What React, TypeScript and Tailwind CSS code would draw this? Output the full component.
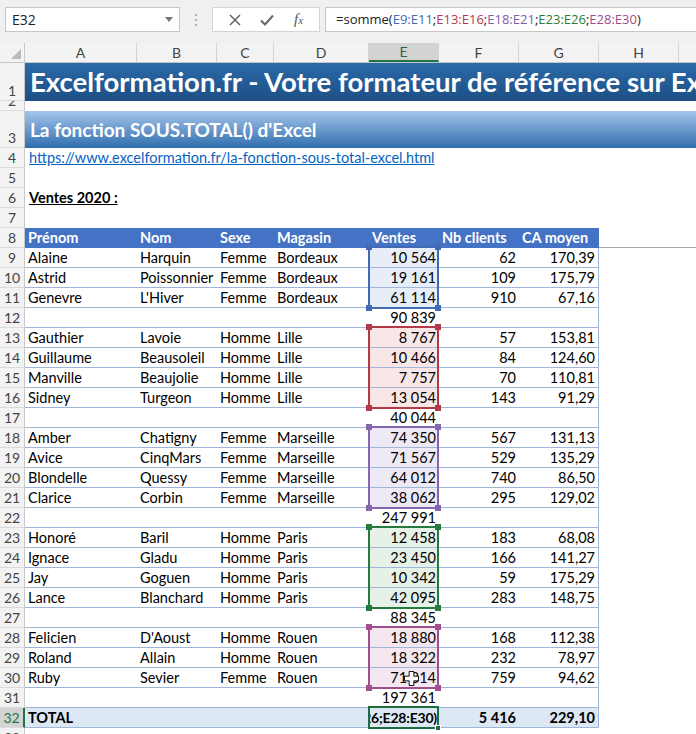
import React from 'react'

type Rng = { from: number; to: number; box: string; fill: string; dot: string; h: string }

// colour boxes drawn by Excel around the references of the formula being edited
const RANGES: Rng[] = [
  { from: 9, to: 11, box: 'border-[#4169b4]', fill: 'bg-[#e8eef8]', dot: 'bg-[#4169b4]', h: 'h-[63px]' },
  { from: 13, to: 16, box: 'border-[#b23a48]', fill: 'bg-[#f9e7e8]', dot: 'bg-[#b23a48]', h: 'h-[83px]' },
  { from: 18, to: 21, box: 'border-[#8465ae]', fill: 'bg-[#eeeaf5]', dot: 'bg-[#8465ae]', h: 'h-[83px]' },
  { from: 23, to: 26, box: 'border-[#267a3e]', fill: 'bg-[#e6f1e7]', dot: 'bg-[#267a3e]', h: 'h-[83px]' },
  { from: 28, to: 30, box: 'border-[#a04e8e]', fill: 'bg-[#f4e7f0]', dot: 'bg-[#a04e8e]', h: 'h-[63px]' },
]

const DATA: { r: number; v: string[] }[] = [
  { r: 9, v: ['Alaine', 'Harquin', 'Femme', 'Bordeaux', '10 564', '62', '170,39'] },
  { r: 10, v: ['Astrid', 'Poissonnier', 'Femme', 'Bordeaux', '19 161', '109', '175,79'] },
  { r: 11, v: ['Genevre', "L'Hiver", 'Femme', 'Bordeaux', '61 114', '910', '67,16'] },
  { r: 12, v: ['', '', '', '', '90 839', '', ''] },
  { r: 13, v: ['Gauthier', 'Lavoie', 'Homme', 'Lille', '8 767', '57', '153,81'] },
  { r: 14, v: ['Guillaume', 'Beausoleil', 'Homme', 'Lille', '10 466', '84', '124,60'] },
  { r: 15, v: ['Manville', 'Beaujolie', 'Homme', 'Lille', '7 757', '70', '110,81'] },
  { r: 16, v: ['Sidney', 'Turgeon', 'Homme', 'Lille', '13 054', '143', '91,29'] },
  { r: 17, v: ['', '', '', '', '40 044', '', ''] },
  { r: 18, v: ['Amber', 'Chatigny', 'Femme', 'Marseille', '74 350', '567', '131,13'] },
  { r: 19, v: ['Avice', 'CinqMars', 'Femme', 'Marseille', '71 567', '529', '135,29'] },
  { r: 20, v: ['Blondelle', 'Quessy', 'Femme', 'Marseille', '64 012', '740', '86,50'] },
  { r: 21, v: ['Clarice', 'Corbin', 'Femme', 'Marseille', '38 062', '295', '129,02'] },
  { r: 22, v: ['', '', '', '', '247 991', '', ''] },
  { r: 23, v: ['Honoré', 'Baril', 'Homme', 'Paris', '12 458', '183', '68,08'] },
  { r: 24, v: ['Ignace', 'Gladu', 'Homme', 'Paris', '23 450', '166', '141,27'] },
  { r: 25, v: ['Jay', 'Goguen', 'Homme', 'Paris', '10 342', '59', '175,29'] },
  { r: 26, v: ['Lance', 'Blanchard', 'Homme', 'Paris', '42 095', '283', '148,75'] },
  { r: 27, v: ['', '', '', '', '88 345', '', ''] },
  { r: 28, v: ['Felicien', "D'Aoust", 'Homme', 'Rouen', '18 880', '168', '112,38'] },
  { r: 29, v: ['Roland', 'Allain', 'Homme', 'Rouen', '18 322', '232', '78,97'] },
  { r: 30, v: ['Ruby', 'Sevier', 'Femme', 'Rouen', '71 814', '759', '94,62'] },
  { r: 31, v: ['', '', '', '', '197 361', '', ''] },
]

const COLW = ['w-[112px]', 'w-[80px]', 'w-[57px]', 'w-[95px]', 'w-[70px]', 'w-[80px]', 'w-[80px]']
const HEADERS = ['Prénom', 'Nom', 'Sexe', 'Magasin', 'Ventes', 'Nb clients', 'CA moyen']
const LETTERS = ['A', 'B', 'C', 'D', 'E', 'F', 'G', 'H']
const LETTER_W = [...COLW, 'w-[80px]']

function Line({ n, h = 'h-[20px]', sel = false, children }: { n: number; h?: string; sel?: boolean; children?: React.ReactNode }) {
  return (
    <div className={`flex ${h}`}>
      <div
        className={`w-[25px] shrink-0 flex items-end justify-center overflow-hidden border-b border-b-[#dadada] text-[14px] leading-[19px] ${
          sel ? 'bg-[#d3d3d3] text-[#217346] border-r-2 border-r-[#217346]' : 'bg-[#f3f3f3] text-[#444] border-r border-r-[#c8c8c8]'
        }`}
      >
        {n}
      </div>
      {children}
    </div>
  )
}

function Handles({ dot }: { dot: string }) {
  return (
    <>
      <span className={`absolute -left-[4px] -top-[4px] w-[6px] h-[6px] ${dot}`} />
      <span className={`absolute -right-[4px] -top-[4px] w-[6px] h-[6px] ${dot}`} />
      <span className={`absolute -left-[4px] -bottom-[4px] w-[6px] h-[6px] ${dot}`} />
      <span className={`absolute -right-[4px] -bottom-[4px] w-[6px] h-[6px] ${dot}`} />
    </>
  )
}

function DataRow({ r, v }: { r: number; v: string[] }) {
  const rng = RANGES.find((x) => r >= x.from && r <= x.to)
  return (
    <Line n={r}>
      {v.map((val, i) => {
        const num = i >= 4
        const isE = i === 4
        return (
          <div
            key={i}
            className={`${COLW[i]} shrink-0 h-full flex items-center px-[3px] border-b border-b-[#9fb5d9] overflow-visible whitespace-nowrap ${
              num ? 'justify-end' : 'justify-start'
            } ${i === 6 ? 'border-r border-r-[#9fb5d9]' : ''} ${isE && rng ? `${rng.fill} relative` : ''}`}
          >
            {val}
            {isE && rng && rng.from === r && (
              <div className={`absolute left-[-1px] top-[-2px] w-[71px] ${rng.h} border-2 ${rng.box} z-10 pointer-events-none`}>
                <Handles dot={rng.dot} />
              </div>
            )}
            {isE && r === 30 && (
              <svg viewBox="0 0 16 16" className="absolute left-[35px] top-[3px] w-[15px] h-[15px] z-20">
                <path d="M5.5 0.5H10.5V5.5H15.5V10.5H10.5V15.5H5.5V10.5H0.5V5.5H5.5Z" fill="white" stroke="black" strokeWidth="1" />
              </svg>
            )}
          </div>
        )
      })}
    </Line>
  )
}

function FormulaBar() {
  return (
    <div className="h-[43px] bg-[#f0f0f0] flex items-start pt-[7px] font-['Open_Sans',sans-serif]">
      <div className="ml-[5px] w-[175px] h-[25px] bg-white border border-[#c6c6c6] flex items-center justify-between pl-[6px] pr-[6px] text-[14px] text-[#222]">
        <span>E32</span>
        <svg viewBox="0 0 8 5" className="w-[8px] h-[5px]">
          <path d="M0 0H8L4 5Z" fill="#777" />
        </svg>
      </div>
      <div className="w-[32px] h-[25px] flex flex-col items-center justify-center gap-[3px]">
        <span className="w-[2px] h-[2px] bg-[#b0b0b0]" />
        <span className="w-[2px] h-[2px] bg-[#b0b0b0]" />
        <span className="w-[2px] h-[2px] bg-[#b0b0b0]" />
      </div>
      <div className="w-[108px] h-[25px] bg-white border border-[#d4d4d4] flex items-center justify-around px-[6px]">
        <svg viewBox="0 0 12 12" className="w-[12px] h-[12px]">
          <path d="M1 1L11 11M11 1L1 11" stroke="#666" strokeWidth="1.5" />
        </svg>
        <svg viewBox="0 0 14 12" className="w-[14px] h-[12px]">
          <path d="M1 6.5L5 10.5L13 1.5" stroke="#666" strokeWidth="2" fill="none" />
        </svg>
        <span className="font-['Liberation_Serif',serif] italic text-[15px] text-[#555] leading-none">
          f<span className="text-[11px]">x</span>
        </span>
      </div>
      <div className="ml-[5px] flex-1 h-[25px] bg-white border border-[#c6c6c6] border-r-0 flex items-center pl-[10px] text-[13px] text-[#222] whitespace-nowrap overflow-hidden">
        =somme(
        <span className="text-[#3f6ab5]">E9:E11</span>;<span className="text-[#b23a48]">E13:E16</span>;
        <span className="text-[#7d5ea8]">E18:E21</span>;<span className="text-[#2e7d32]">E23:E26</span>;
        <span className="text-[#9e4d8c]">E28:E30</span>)
      </div>
    </div>
  )
}

export default function App() {
  return (
    <div className="w-[696px] h-[734px] overflow-hidden bg-white font-['Lato',sans-serif] text-[14.5px] text-black">
      <FormulaBar />

      {/* column letters */}
      <div className="flex h-[20px] bg-[#f3f3f3] border-b border-b-[#c6c6c6] text-[14px] text-[#444]">
        <div className="w-[25px] shrink-0 border-r border-r-[#c8c8c8] relative">
          <svg viewBox="0 0 10 10" className="absolute right-[3px] bottom-[3px] w-[10px] h-[10px]">
            <path d="M10 0V10H0Z" fill="#b9b9b9" />
          </svg>
        </div>
        {LETTERS.map((l, i) => (
          <div
            key={l}
            className={`${LETTER_W[i]} shrink-0 flex items-center justify-center border-r border-r-[#d4d4d4] ${
              l === 'E' ? 'bg-[#d3d3d3] text-[#1e6b41] border-b-2 border-b-[#217346]' : ''
            }`}
          >
            {l}
          </div>
        ))}
        <div className="flex-1" />
      </div>

      <Line n={1} h="h-[38px]">
        <div className="flex-1 bg-gradient-to-b from-[#2b6aa8] to-[#1d4f86] flex items-center pl-[5px] whitespace-nowrap overflow-hidden">
          <span className="text-white font-bold text-[27.5px] leading-none">Excelformation.fr - Votre formateur de référence sur Excel</span>
        </div>
      </Line>
      <Line n={2} h="h-[10px]" />
      <Line n={3} h="h-[37px]">
        <div className="flex-1 bg-gradient-to-b from-[#a3c5ea] to-[#2f6eae] flex items-center pl-[5px] whitespace-nowrap overflow-hidden">
          <span className="text-white font-bold text-[19px] leading-none">La fonction SOUS.TOTAL() d'Excel</span>
        </div>
      </Line>
      <Line n={4}>
        <div className="flex items-center pl-[4px] text-[#0563c1] underline whitespace-nowrap">
          https://www.excelformation.fr/la-fonction-sous-total-excel.html
        </div>
      </Line>
      <Line n={5} />
      <Line n={6}>
        <div className="flex items-center pl-[4px] font-bold underline whitespace-nowrap">Ventes 2020 :</div>
      </Line>
      <Line n={7} />
      <Line n={8}>
        {HEADERS.map((hd, i) => (
          <div key={hd} className={`${COLW[i]} shrink-0 h-full flex items-center px-[3px] bg-[#4472c4] text-white font-bold whitespace-nowrap`}>
            {hd}
          </div>
        ))}
        <div className="flex-1 h-full border-b border-b-[#a8a8a8]" />
      </Line>

      {DATA.map((d) => (
        <DataRow key={d.r} r={d.r} v={d.v} />
      ))}

      <Line n={32} sel>
        <div className="w-[112px] shrink-0 h-full flex items-center px-[3px] bg-[#dde8f5] border-b border-b-[#9fb5d9] font-bold">TOTAL</div>
        <div className="w-[80px] shrink-0 h-full bg-[#dde8f5] border-b border-b-[#9fb5d9]" />
        <div className="w-[57px] shrink-0 h-full bg-[#dde8f5] border-b border-b-[#9fb5d9]" />
        <div className="w-[95px] shrink-0 h-full bg-[#dde8f5] border-b border-b-[#9fb5d9]" />
        <div className="w-[70px] shrink-0 h-full bg-[#dde8f5] border-b border-b-[#9fb5d9] relative">
          <div className="h-full flex items-center justify-end overflow-hidden whitespace-nowrap pr-[2px] font-bold text-[14px] tracking-[-0.2px]">
            =somme(E9:E11;E13:E16;E18:E21;E23:E26;E28:E30)
          </div>
          <div className="absolute left-[-1px] top-[-2px] w-[71px] h-[23px] border-2 border-[#1e6b41] z-10">
            <span className="absolute -right-[4px] -bottom-[4px] w-[6px] h-[6px] bg-[#1e6b41] border border-white" />
          </div>
        </div>
        <div className="w-[80px] shrink-0 h-full flex items-center justify-end px-[3px] bg-[#dde8f5] border-b border-b-[#9fb5d9] font-bold">5 416</div>
        <div className="w-[80px] shrink-0 h-full flex items-center justify-end px-[3px] bg-[#dde8f5] border-b border-r border-b-[#9fb5d9] border-r-[#9fb5d9] font-bold">229,10</div>
      </Line>
      <Line n={33} />
    </div>
  )
}
